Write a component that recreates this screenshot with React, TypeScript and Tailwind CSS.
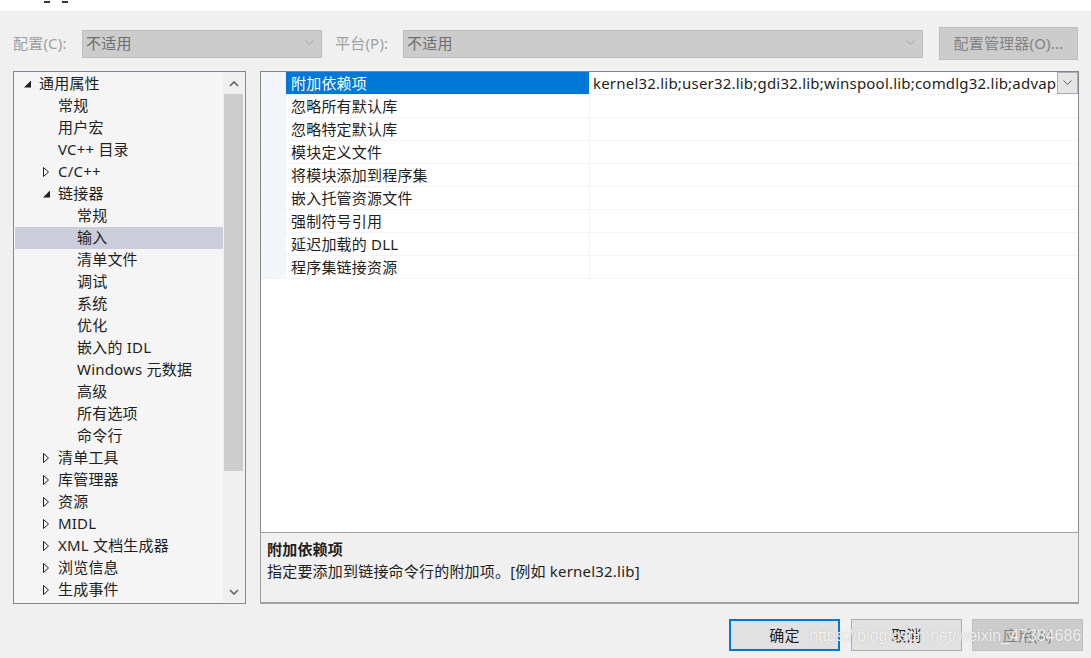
import React from "react";

type TreeItem = { label: string; level: 0 | 1 | 2; arrow?: "exp" | "col"; selected?: boolean };

const tree: TreeItem[] = [
  { label: "通用属性", level: 0, arrow: "exp" },
  { label: "常规", level: 1 },
  { label: "用户宏", level: 1 },
  { label: "VC++ 目录", level: 1 },
  { label: "C/C++", level: 1, arrow: "col" },
  { label: "链接器", level: 1, arrow: "exp" },
  { label: "常规", level: 2 },
  { label: "输入", level: 2, selected: true },
  { label: "清单文件", level: 2 },
  { label: "调试", level: 2 },
  { label: "系统", level: 2 },
  { label: "优化", level: 2 },
  { label: "嵌入的 IDL", level: 2 },
  { label: "Windows 元数据", level: 2 },
  { label: "高级", level: 2 },
  { label: "所有选项", level: 2 },
  { label: "命令行", level: 2 },
  { label: "清单工具", level: 1, arrow: "col" },
  { label: "库管理器", level: 1, arrow: "col" },
  { label: "资源", level: 1, arrow: "col" },
  { label: "MIDL", level: 1, arrow: "col" },
  { label: "XML 文档生成器", level: 1, arrow: "col" },
  { label: "浏览信息", level: 1, arrow: "col" },
  { label: "生成事件", level: 1, arrow: "col" },
];

const props = [
  "附加依赖项",
  "忽略所有默认库",
  "忽略特定默认库",
  "模块定义文件",
  "将模块添加到程序集",
  "嵌入托管资源文件",
  "强制符号引用",
  "延迟加载的 DLL",
  "程序集链接资源",
];

const indent = ["pl-[8px]", "pl-[27px]", "pl-[46px]"];

function Chevron({ className = "", color = "#a0a0a0" }: { className?: string; color?: string }) {
  return (
    <svg width="9" height="6" viewBox="0 0 9 6" className={className}>
      <path d="M0.5 0.5 L4.5 4.5 L8.5 0.5" fill="none" stroke={color} strokeWidth="1" />
    </svg>
  );
}

function Arrow({ kind }: { kind?: "exp" | "col" }) {
  if (kind === "exp")
    return (
      <svg width="16" height="22" viewBox="0 0 16 22" className="shrink-0">
        <path d="M1 14.5 L8 14.5 L8 7.5 Z" fill="#1e1e1e" />
      </svg>
    );
  if (kind === "col")
    return (
      <svg width="16" height="22" viewBox="0 0 16 22" className="shrink-0">
        <path d="M1.5 6.5 L6.5 11 L1.5 15.5 Z" fill="none" stroke="#1e1e1e" strokeWidth="1" />
      </svg>
    );
  return <span className="w-[16px] shrink-0" />;
}

export default function App() {
  return (
    <div className="relative w-[1091px] h-[658px] bg-[#f0f0f0] overflow-hidden font-['Noto_Sans','Noto_Sans_CJK_SC',sans-serif] text-[15px] leading-[22px] tracking-[0.2px] text-[#1e1e1e]">
      {/* top strip */}
      <div className="h-[11px] bg-white flex items-start">
        <div className="ml-[44px] mt-[1px] w-[6px] h-[2px] bg-[#333]" />
        <div className="ml-[12px] mt-[1px] w-[6px] h-[2px] bg-[#333]" />
      </div>

      {/* configuration row */}
      <div className="mt-[16px] flex items-center pl-[13px] h-[33px]">
        <div className="w-[69px] text-[#a0a0a0] pb-[2px]">配置(C):</div>
        <div className="w-[240px] h-[28px] bg-[#cccccc] border border-[#bfbfbf] flex items-center justify-between pl-[3px] pr-[7px] pb-[2px] text-[#6d6d6d]">
          <span>不适用</span>
          <Chevron />
        </div>
        <div className="ml-[13px] w-[68px] text-[#a0a0a0] pb-[2px]">平台(P):</div>
        <div className="w-[520px] h-[28px] bg-[#cccccc] border border-[#bfbfbf] flex items-center justify-between pl-[3px] pr-[7px] pb-[2px] text-[#6d6d6d]">
          <span>不适用</span>
          <Chevron />
        </div>
        <div className="ml-[16px] w-[139px] h-[33px] bg-[#cccccc] border border-[#bfbfbf] flex items-center justify-center pb-[2px] text-[#838383]">
          配置管理器(O)...
        </div>
      </div>

      {/* main */}
      <div className="mt-[11px] flex">
        {/* tree */}
        <div className="ml-[13px] w-[233px] h-[533px] border border-[#828790] bg-[#f5f5f5] p-px flex">
          <div className="flex-1 flex flex-col">
            {tree.map((t, i) => (
              <div
                key={i}
                className={`h-[22px] flex items-center ${indent[t.level]} ${t.selected ? "bg-[#cbcdda]" : ""}`}
              >
                <Arrow kind={t.arrow} />
                <span className="whitespace-nowrap leading-[20px] pb-[2px]">{t.label}</span>
              </div>
            ))}
          </div>
          <div className="w-[21px] bg-[#f0f0f0] flex flex-col">
            <div className="h-[21px] flex items-center justify-center">
              <svg width="10" height="6" viewBox="0 0 10 6">
                <path d="M1 5 L5 1 L9 5" fill="none" stroke="#606060" strokeWidth="1.6" />
              </svg>
            </div>
            <div className="mx-[1px] h-[377px] bg-[#cdcdcd]" />
            <div className="flex-1" />
            <div className="h-[21px] flex items-center justify-center">
              <svg width="10" height="6" viewBox="0 0 10 6">
                <path d="M1 1 L5 5 L9 1" fill="none" stroke="#606060" strokeWidth="1.6" />
              </svg>
            </div>
          </div>
        </div>

        {/* right side */}
        <div className="ml-[14px] w-[819px] flex flex-col">
          <div className="h-[461px] border border-[#828790] border-b-0 bg-white flex flex-col">
            {props.map((p, i) => (
              <div key={i} className="h-[23px] flex border-b border-[#f0f4f9]">
                <div className="w-[25px] bg-[#f2f5fa]" />
                <div
                  className={`w-[304px] flex items-center pl-[5px] pb-[1px] border-r border-[#f0f4f9] ${
                    i === 0 ? "bg-[#0078d7] text-white" : ""
                  }`}
                >
                  {p}
                </div>
                <div className="flex-1 flex items-center pl-[3px] overflow-hidden">
                  {i === 0 && (
                    <>
                      <span className="flex-1 whitespace-nowrap overflow-hidden pb-[1px]">
                        kernel32.lib;user32.lib;gdi32.lib;winspool.lib;comdlg32.lib;advapi32.lib
                      </span>
                      <div className="w-[21px] h-[22px] bg-[#e5e5e5] border border-[#adadad] flex items-center justify-center">
                        <Chevron color="#606060" />
                      </div>
                    </>
                  )}
                </div>
              </div>
            ))}
          </div>
          <div className="h-[72px] border-2 border-[#a0a0a0] border-t-[1px] border-l-[1px] border-r-[1px] bg-[#f0f0f0] px-[6px] pt-[5px]">
            <div className="font-bold leading-[22px]">附加依赖项</div>
            <div className="leading-[22px]">指定要添加到链接命令行的附加项。[例如 kernel32.lib]</div>
          </div>
        </div>
      </div>

      {/* buttons */}
      <div className="mt-[15px] flex justify-end pr-[8px] gap-[10px]">
        <div className="w-[111px] h-[32px] border-2 border-[#0078d7] bg-[#e1e1e1] flex items-center justify-center pb-[1px]">确定</div>
        <div className="ml-[1px] w-[111px] h-[32px] border border-[#adadad] bg-[#e1e1e1] flex items-center justify-center pb-[1px]">取消</div>
        <div className="w-[111px] h-[32px] border border-[#bfbfbf] bg-[#cccccc] flex items-center justify-center pb-[1px] text-[#838383]">应用(A)</div>
      </div>

      {/* watermark */}
      <div className="absolute left-[809px] top-[626px] text-[16px] leading-[20px] tracking-normal font-['Liberation_Sans',sans-serif] text-white/85 [text-shadow:0_0_1px_rgba(120,120,120,0.6)] whitespace-nowrap">
        https://blog.csdn.net/weixin_47384686
      </div>
    </div>
  );
}
